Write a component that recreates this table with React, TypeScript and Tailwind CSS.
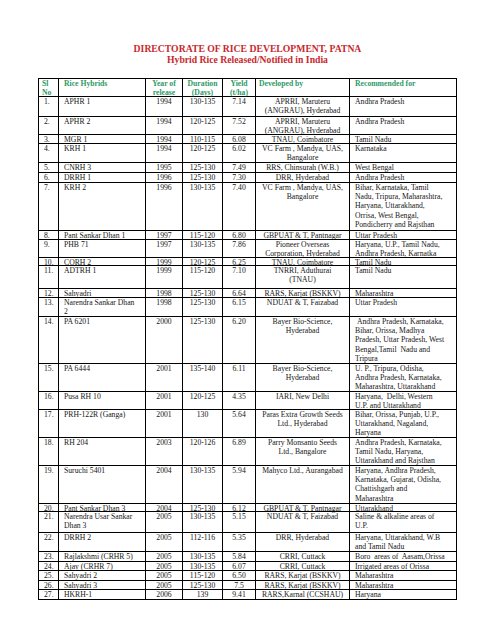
import React from 'react';

type Row = {
  no: string;
  name: React.ReactNode;
  year: string;
  dur: string;
  yld: string;
  dev: React.ReactNode;
  rec: React.ReactNode;
  h: number;
};

const rows: Row[] = [
  { no: '1.', name: 'APHR 1', year: '1994', dur: '130-135', yld: '7.14', dev: <>APRRI, Maruteru<br />(ANGRAU), Hyderabad</>, rec: 'Andhra Pradesh', h: 20 },
  { no: '2.', name: 'APHR 2', year: '1994', dur: '120-125', yld: '7.52', dev: <>APRRI, Maruteru<br />(ANGRAU), Hyderabad</>, rec: 'Andhra Pradesh', h: 18 },
  { no: '3.', name: 'MGR 1', year: '1994', dur: '110-115', yld: '6.08', dev: 'TNAU, Coimbatore', rec: 'Tamil Nadu', h: 9 },
  { no: '4.', name: 'KRH 1', year: '1994', dur: '120-125', yld: '6.02', dev: <>VC Farm , Mandya, UAS,<br />Bangalore</>, rec: 'Karnataka', h: 19 },
  { no: '5.', name: 'CNRH 3', year: '1995', dur: '125-130', yld: '7.49', dev: 'RRS, Chinsurah (W.B.)', rec: 'West Bengal', h: 10 },
  { no: '6.', name: 'DRRH 1', year: '1996', dur: '125-130', yld: '7.30', dev: 'DRR, Hyderabad', rec: 'Andhra Pradesh', h: 10 },
  { no: '7.', name: 'KRH 2', year: '1996', dur: '130-135', yld: '7.40', dev: <>VC Farm , Mandya, UAS,<br />Bangalore</>, rec: <>Bihar, Karnataka, Tamil<br />Nadu, Tripura, Maharashtra,<br />Haryana, Uttarakhand,<br />Orrisa, West Bengal,<br />Pondicherry and Rajsthan</>, h: 48 },
  { no: '8.', name: 'Pant Sankar Dhan 1', year: '1997', dur: '115-120', yld: '6.80', dev: 'GBPUAT & T, Pantnagar', rec: 'Uttar Pradesh', h: 9 },
  { no: '9.', name: 'PHB 71', year: '1997', dur: '130-135', yld: '7.86', dev: <>Pioneer Overseas<br />Corporation, Hyderabad</>, rec: <>Haryana, U.P., Tamil Nadu,<br />Andhra Pradesh, Karnatka</>, h: 18 },
  { no: '10.', name: 'CORH 2', year: '1999', dur: '120-125', yld: '6.25', dev: 'TNAU, Coimbatore', rec: 'Tamil Nadu', h: 8 },
  { no: '11.', name: 'ADTRH 1', year: '1999', dur: '115-120', yld: '7.10', dev: <>TNRRI, Aduthurai<br />(TNAU)</>, rec: 'Tamil Nadu', h: 23 },
  { no: '12.', name: 'Sahyadri', year: '1998', dur: '125-130', yld: '6.64', dev: 'RARS, Karjat (BSKKV)', rec: 'Maharashtra', h: 9 },
  { no: '13.', name: <>Narendra Sankar Dhan<br />2</>, year: '1998', dur: '125-130', yld: '6.15', dev: 'NDUAT & T, Faizabad', rec: 'Uttar Pradesh', h: 19 },
  { no: '14.', name: 'PA 6201', year: '2000', dur: '125-130', yld: '6.20', dev: <>Bayer Bio-Science,<br />Hyderabad</>, rec: <>{'\u00a0'}Andhra Pradesh, Karnataka,<br />Bihar, Orissa, Madhya<br />Pradesh, Uttar Pradesh, West<br />Bengal,Tamil{'\u00a0 '}Nadu and<br />Tripura</>, h: 47 },
  { no: '15.', name: 'PA 6444', year: '2001', dur: '135-140', yld: '6.11', dev: <>Bayer Bio-Science,<br />Hyderabad</>, rec: <>U. P., Tripura, Odisha,<br />Andhra Pradesh, Karnataka,<br />Maharashtra, Uttarakhand</>, h: 28 },
  { no: '16.', name: 'Pusa RH 10', year: '2001', dur: '120-125', yld: '4.35', dev: 'IARI, New Delhi', rec: <>Haryana,{'\u00a0 '}Delhi, Western<br />U.P. and Uttarakhand</>, h: 18 },
  { no: '17.', name: 'PRH-122R (Ganga)', year: '2001', dur: '130', yld: '5.64', dev: <>Paras Extra Growth Seeds<br />Ltd., Hyderabad</>, rec: <>Bihar, Orissa, Punjab, U.P.,<br />Uttarakhand, Nagaland,<br />Haryana</>, h: 28 },
  { no: '18.', name: 'RH 204', year: '2003', dur: '120-126', yld: '6.89', dev: <>Parry Monsanto Seeds<br />Ltd., Bangalore</>, rec: <>Andhra Pradesh, Karnataka,<br />Tamil Nadu, Haryana,<br />Uttarakhand and Rajsthan</>, h: 28 },
  { no: '19.', name: 'Suruchi 5401', year: '2004', dur: '130-135', yld: '5.94', dev: 'Mahyco Ltd., Aurangabad', rec: <>Haryana, Andhra Pradesh,<br />Karnataka, Gujarat, Odisha,<br />Chattishgarh and<br />Maharashtra</>, h: 38 },
  { no: '20.', name: 'Pant Sankar Dhan 3', year: '2004', dur: '125-130', yld: '6.12', dev: 'GBPUAT & T, Pantnagar', rec: 'Uttarakhand', h: 8 },
  { no: '21.', name: <>Narendra Usar Sankar<br />Dhan 3</>, year: '2005', dur: '130-135', yld: '5.15', dev: 'NDUAT & T, Faizabad', rec: <>Saline &amp; alkaline areas of<br />U.P.</>, h: 21 },
  { no: '22.', name: 'DRRH 2', year: '2005', dur: '112-116', yld: '5.35', dev: 'DRR, Hyderabad', rec: <>Haryana, Uttarakhand, W.B<br />and Tamil Nadu</>, h: 19 },
  { no: '23.', name: 'Rajlakshmi (CRHR 5)', year: '2005', dur: '130-135', yld: '5.84', dev: 'CRRI, Cuttack', rec: <>Boro{'\u00a0 '}areas of{'\u00a0 '}Aasam,Orissa</>, h: 10 },
  { no: '24.', name: 'Ajay (CRHR 7)', year: '2005', dur: '130-135', yld: '6.07', dev: 'CRRI, Cuttack', rec: 'Irrigated areas of Orissa', h: 9 },
  { no: '25.', name: 'Sahyadri 2', year: '2005', dur: '115-120', yld: '6.50', dev: 'RARS, Karjat (BSKKV)', rec: 'Maharashtra', h: 10 },
  { no: '26.', name: 'Sahyadri 3', year: '2005', dur: '125-130', yld: '7.5', dev: 'RARS, Karjat (BSKKV)', rec: 'Maharashtra', h: 9 },
  { no: '27.', name: 'HKRH-1', year: '2006', dur: '139', yld: '9.41', dev: 'RARS,Karnal (CCSHAU)', rec: 'Haryana', h: 10 },
];

const cell = 'border-r border-black whitespace-nowrap overflow-visible';

const App: React.FC = () => {
  return (
    <div className="w-[495px] h-[640px] bg-white text-[#161616] font-['Liberation_Serif',serif] overflow-hidden">
      <div className="pt-[44px] text-center font-bold text-[#c8282e] text-[9.7px] leading-[10.8px]">
        <div>DIRECTORATE OF RICE DEVELOPMENT, PATNA</div>
        <div>Hybrid Rice Released/Notified in India</div>
      </div>

      <div className="mt-[12px] ml-[38px] w-[419px] border-l border-t border-black text-[7.7px] leading-[9.4px]">
        <div className="flex h-[18px] border-b border-black font-bold text-[#2f9a66]">
          <div className={`${cell} w-[20px] pl-[3px]`}>Sl<br />No</div>
          <div className={`${cell} w-[87px] pl-[5px]`}>Rice Hybrids</div>
          <div className={`${cell} w-[37px] text-center`}>Year of<br />release</div>
          <div className={`${cell} w-[40px] text-center`}>Duration<br />(Days)</div>
          <div className={`${cell} w-[33px] text-center`}>Yield<br />(t/ha)</div>
          <div className={`${cell} w-[94px] pl-[3px]`}>Developed by</div>
          <div className={`${cell} w-[107px] pl-[5px]`}>Recommended for</div>
        </div>

        {rows.map((r) => (
          <div key={r.no} className="flex border-b border-black" style={{ height: r.h }}>
            <div className={`${cell} w-[20px] pl-[5px]`}>{r.no}</div>
            <div className={`${cell} w-[87px] pl-[5px]`}>{r.name}</div>
            <div className={`${cell} w-[37px] text-center`}>{r.year}</div>
            <div className={`${cell} w-[40px] text-center`}>{r.dur}</div>
            <div className={`${cell} w-[33px] text-center`}>{r.yld}</div>
            <div className={`${cell} w-[94px] text-center`}>{r.dev}</div>
            <div className={`${cell} w-[107px] pl-[5px]`}>{r.rec}</div>
          </div>
        ))}
      </div>
    </div>
  );
};

export default App;
